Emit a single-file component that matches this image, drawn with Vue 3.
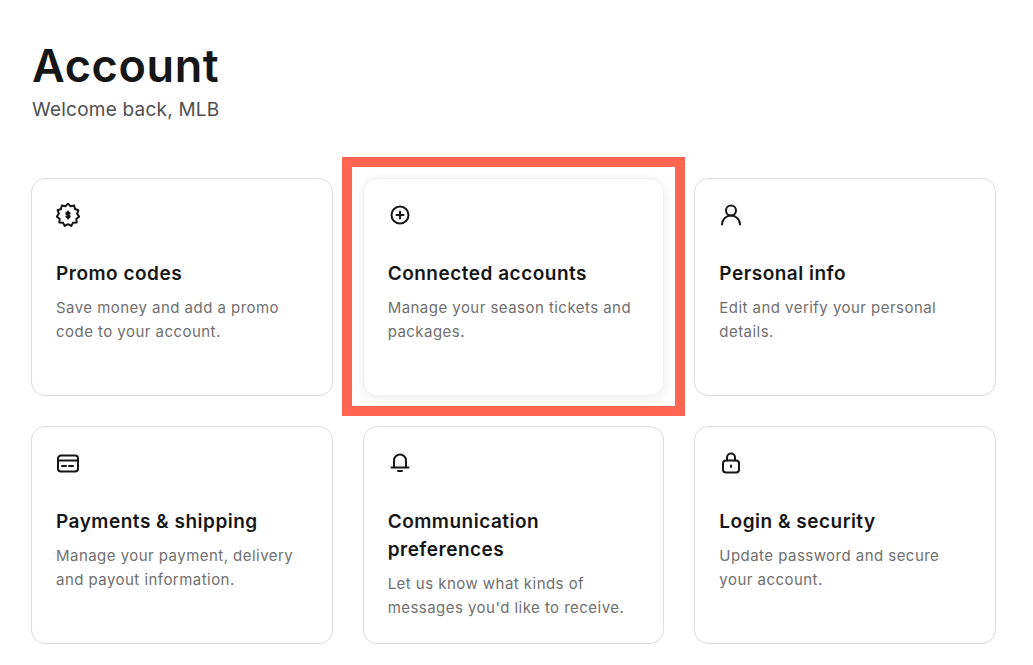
<template>
  <main class="page">
    <header class="head">
      <h1>Account</h1>
      <p>Welcome back, MLB</p>
    </header>
    <section class="grid">
      <article
        v-for="card in cards"
        :key="card.title"
        class="card"
        :class="{ marked: card.marked }"
      >
        <svg class="icon" width="24" height="24" viewBox="0 0 24 24" fill="none" stroke="#161616" stroke-width="2" stroke-linecap="round" stroke-linejoin="round">
          <path v-for="d in card.icon" :key="d" :d="d" />
        </svg>
        <h2 v-html="card.title"></h2>
        <p>{{ card.text }}</p>
      </article>
    </section>
  </main>
</template>

<script setup>
// 11 pointed badge outline for the promo icon
function badge(cx, cy, outer, inner, points) {
  const parts = []
  for (let i = 0; i < points * 2; i++) {
    const r = i % 2 === 0 ? outer : inner
    const a = (Math.PI * i) / points - Math.PI / 2
    parts.push(`${(cx + r * Math.cos(a)).toFixed(2)} ${(cy + r * Math.sin(a)).toFixed(2)}`)
  }
  return `M${parts.join('L')}z`
}

const cards = [
  {
    title: 'Promo codes',
    text: 'Save money and add a promo code to your account.',
    icon: [
      badge(12, 12, 11.4, 9.2, 11),
      'M13.7 10.4c-.3-.5-.9-.8-1.7-.8-1 0-1.7.4-1.7 1.1 0 1.6 3.4.8 3.4 2.5 0 .7-.7 1.2-1.7 1.2-.8 0-1.4-.3-1.7-.8',
      'M12 8.6v6.8'
    ]
  },
  {
    title: 'Connected accounts',
    text: 'Manage your season tickets and packages.',
    marked: true,
    icon: ['M12 3.5a8.5 8.5 0 1 0 0 17 8.5 8.5 0 0 0 0-17z', 'M12 8.5v7', 'M8.5 12h7']
  },
  {
    title: 'Personal info',
    text: 'Edit and verify your personal details.',
    icon: ['M12 2.5a5 5 0 1 0 0 10 5 5 0 0 0 0-10z', 'M3 21.5c0-5 4-9 9-9s9 4 9 9']
  },
  {
    title: 'Payments &amp; shipping',
    text: 'Manage your payment, delivery and payout information.',
    icon: [
      'M5 4.5h14a3 3 0 0 1 3 3v10a3 3 0 0 1-3 3H5a3 3 0 0 1-3-3v-10a3 3 0 0 1 3-3z',
      'M2 9.5h20',
      'M6 15h4',
      'M13 15h4'
    ]
  },
  {
    title: 'Communication preferences',
    text: "Let us know what kinds of messages you'd like to receive.",
    icon: ['M6 16V9.5a6 6 0 0 1 12 0V16', 'M3.5 16.5h17', 'M10 20h4']
  },
  {
    title: 'Login &amp; security',
    text: 'Update password and secure your account.',
    icon: [
      'M7 9.5h10a3 3 0 0 1 3 3v6a3 3 0 0 1-3 3H7a3 3 0 0 1-3-3v-6a3 3 0 0 1 3-3z',
      'M8 9.5V6.5a4 4 0 0 1 8 0v3',
      'M12 14.5v1.5'
    ]
  }
]
</script>

<style>
body {
  background: #fff;
}
</style>

<style scoped>
.page {
  width: 965px;
  padding: 0 37px 21px 31px;
  font-family: Inter, "Liberation Sans", sans-serif;
  color: #161616;
}

.head {
  padding: 38px 0 0 1px;
  height: 178px;
  box-sizing: border-box;
}

.head h1 {
  margin: 0;
  font-size: 45px;
  line-height: 56px;
  font-weight: 600;
  letter-spacing: 0.65px;
}

.head p {
  margin: 2px 0 0;
  font-size: 19px;
  line-height: 28px;
  letter-spacing: 0.22px;
  color: #4f4f4f;
}

.grid {
  display: grid;
  grid-template-columns: repeat(3, 1fr);
  grid-auto-rows: 218px;
  gap: 30px;
}

.card {
  position: relative;
  box-sizing: border-box;
  padding: 24px;
  border: 1px solid #dcdcdc;
  border-radius: 14px;
  background: #fff;
}

.card.marked {
  border-color: #f0f0f2;
  box-shadow: 0 3px 12px rgba(30, 40, 70, 0.08);
}

.card.marked::after {
  content: "";
  position: absolute;
  inset: -22px -22px -21px -22px;
  border: 10px solid #ff6550;
  pointer-events: none;
}

.icon {
  display: block;
}

.card h2 {
  margin: 33px 0 0;
  font-size: 19px;
  line-height: 28px;
  font-weight: 600;
  letter-spacing: 0.5px;
}

.card p {
  margin: 8px 0 0;
  font-size: 15px;
  line-height: 24px;
  letter-spacing: 0.46px;
  color: #6f6f6f;
}
</style>
